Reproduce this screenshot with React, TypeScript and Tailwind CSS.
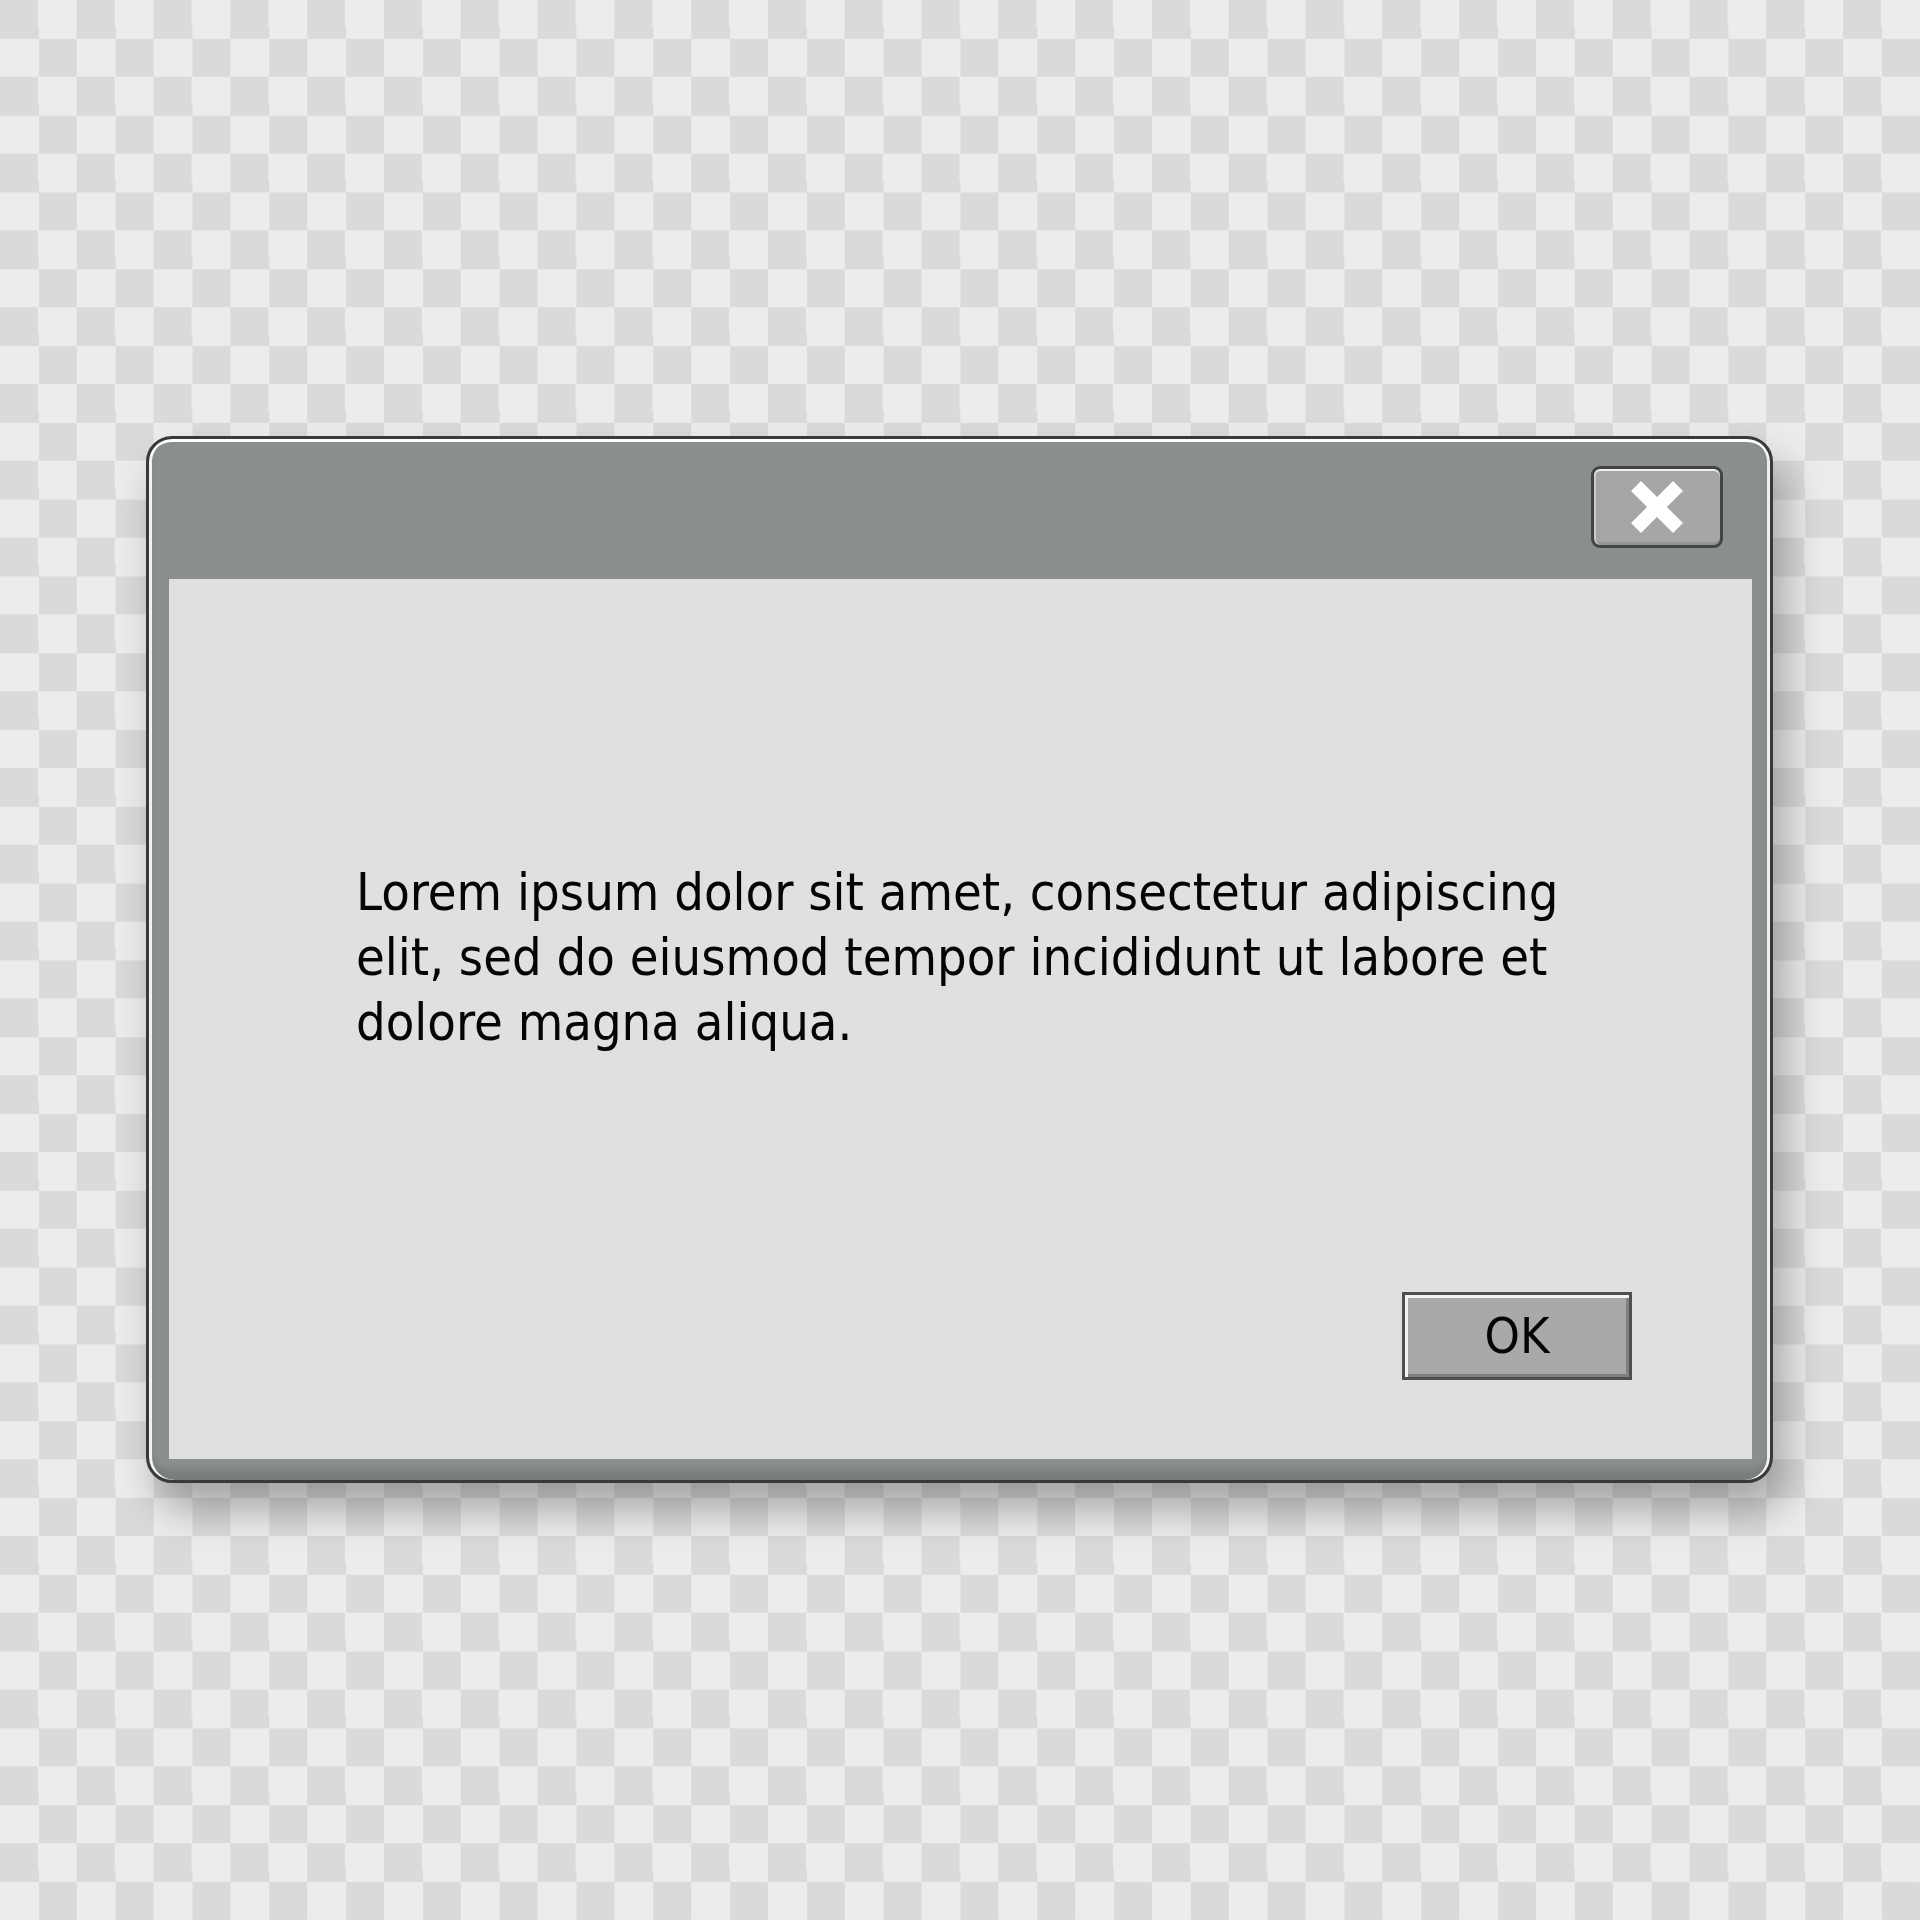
export default function App() {
  return (
    <div className="w-[1920px] h-[1920px] pl-[146px] pt-[436px] bg-[repeating-conic-gradient(#ececec_0_25%,#d9dadb_0_50%)] bg-[length:76.8px_76.8px] font-['DejaVu_Sans_Condensed','DejaVu_Sans',sans-serif]">
      {/* dialog window */}
      <div className="w-[1627px] h-[1047px] flex flex-col rounded-[26px] border-[3px] border-[#37393a] bg-[#8b8e8e] shadow-[inset_0_3px_0_#ffffff,inset_3px_0_0_#f2f2f2,inset_-3px_0_0_#eeeeee,inset_0_-10px_6px_rgba(0,0,0,0.12),12px_26px_40px_rgba(0,0,0,0.3)]">
        {/* title bar */}
        <div className="h-[140px] flex justify-end items-start pt-[27px] pr-[47px]">
          <button className="w-[132px] h-[82px] flex items-center justify-center rounded-[9px] border-[3px] border-[#434545] bg-[#a5a7a7] shadow-[inset_0_2px_0_#f0f0f0,inset_2px_0_0_#c8caca,inset_0_-3px_0_#929494]">
            <svg width="52" height="52" viewBox="0 0 52 52">
              <line x1="5" y1="5" x2="47" y2="47" stroke="#ffffff" strokeWidth="14" />
              <line x1="47" y1="5" x2="5" y2="47" stroke="#ffffff" strokeWidth="14" />
            </svg>
          </button>
        </div>

        {/* content */}
        <div className="flex-1 ml-[20px] mr-[18px] mb-[21px] flex flex-col bg-[#e0e0e0]">
          <p className="pt-[281px] pl-[187px] text-[52px] leading-[65px] text-[#050505]">
            <span className="block whitespace-nowrap">Lorem ipsum dolor sit amet, consectetur adipiscing</span>
            <span className="block whitespace-nowrap">elit, sed do eiusmod tempor incididunt ut labore et</span>
            <span className="block whitespace-nowrap">dolore magna aliqua.</span>
          </p>
          <button className="mt-auto self-end mr-[120px] mb-[79px] w-[230px] h-[88px] flex items-center justify-center border-[3px] border-[#4e5050] bg-[#a8aaaa] shadow-[inset_3px_3px_0_#f4f4f4,inset_-3px_-3px_0_#7f8181] text-[50px] leading-none text-[#050505]">
            OK
          </button>
        </div>
      </div>
    </div>
  );
}
